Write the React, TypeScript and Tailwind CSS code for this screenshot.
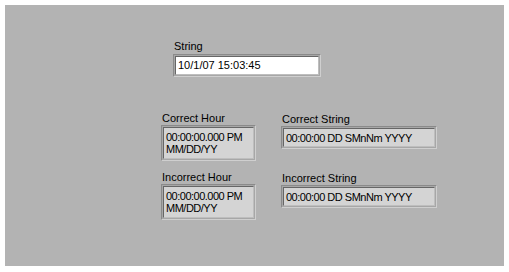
import React from 'react';

const Label: React.FC<{ text: string }> = ({ text }) => (
  <div className="h-[13px] pl-[1px] text-[11px] leading-[13px] text-black whitespace-nowrap">{text}</div>
);

const Frame: React.FC<{ className?: string; fill: string; children: React.ReactNode }> = ({ className, fill, children }) => (
  <div className={`border border-t-[#8a8a8a] border-l-[#8a8a8a] border-b-[#cfcfcf] border-r-[#cfcfcf] bg-[#a7a7a7] p-[1px] ${className ?? ''}`}>
    <div className={`h-full w-full border border-t-[#666666] border-l-[#666666] border-b-[#bebebe] border-r-[#bebebe] ${fill}`}>
      {children}
    </div>
  </div>
);

const HourIndicator: React.FC<{ label: string }> = ({ label }) => (
  <div>
    <Label text={label} />
    <Frame className="h-[36px] w-[95px]" fill="bg-[#d4d4d4]">
      <div className="pl-[2px] pt-[3px] text-[11px] leading-[12px] tracking-[-0.5px] whitespace-nowrap">
        <div>00:00:00.000 PM</div>
        <div>MM/DD/YY</div>
      </div>
    </Frame>
  </div>
);

const StringIndicator: React.FC<{ label: string }> = ({ label }) => (
  <div>
    <Label text={label} />
    <Frame className="h-[23px] w-[156px]" fill="bg-[#d4d4d4]">
      <div className="pl-[2px] pt-[3px] text-[11px] leading-[13px] tracking-[-0.5px] whitespace-nowrap">
        00:00:00 DD SMnNm YYYY
      </div>
    </Frame>
  </div>
);

export default function App() {
  return (
    <div className="min-h-screen bg-white pl-[5px] pt-[5px] font-['Liberation_Sans',Arial,sans-serif] text-black">
      <div className="h-[261px] w-[499px] bg-[#b3b3b3] pl-[156px] pt-[35px]">
        {/* string control */}
        <div className="ml-[12px]">
          <div className="mb-[1px]">
            <Label text="String" />
          </div>
          <Frame className="h-[23px] w-[148px]" fill="bg-white">
            <div className="pl-[2px] pt-[2px] text-[11px] leading-[13px] whitespace-nowrap">10/1/07 15:03:45</div>
          </Frame>
        </div>

        <div className="mt-[35px] flex gap-[25px]">
          <div className="flex flex-col gap-[10px]">
            <HourIndicator label="Correct Hour" />
            <HourIndicator label="Incorrect Hour" />
          </div>
          <div className="mt-[1px] flex flex-col gap-[23px]">
            <StringIndicator label="Correct String" />
            <StringIndicator label="Incorrect String" />
          </div>
        </div>
      </div>
    </div>
  );
}
